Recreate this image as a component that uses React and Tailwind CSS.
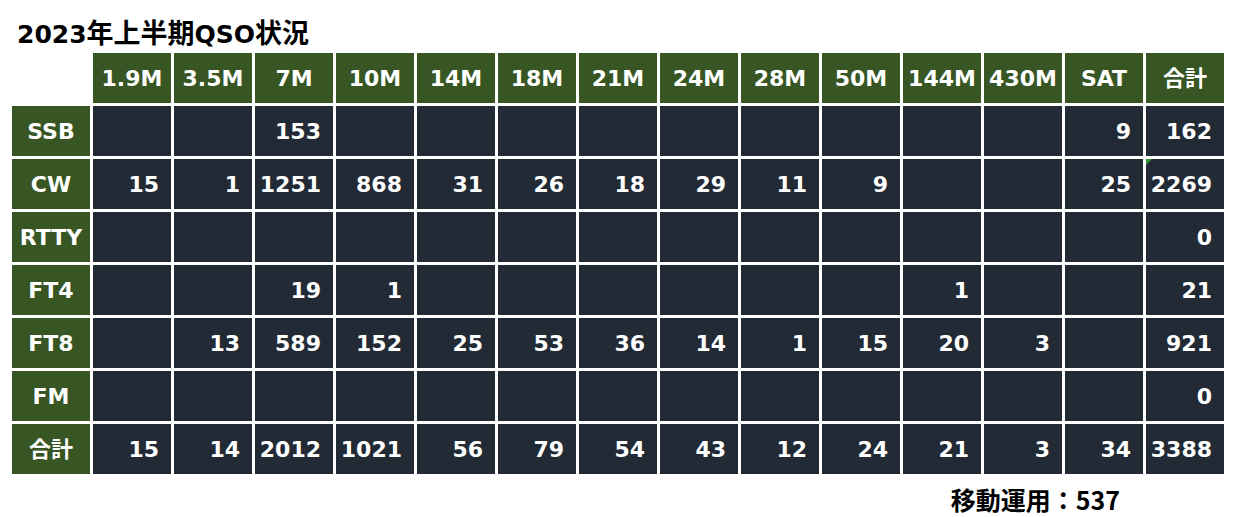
import React from 'react';

const BANDS = ['1.9M', '3.5M', '7M', '10M', '14M', '18M', '21M', '24M', '28M', '50M', '144M', '430M', 'SAT', '合計'];

const ROWS = [
    { mode: 'SSB', values: ['', '', '153', '', '', '', '', '', '', '', '', '', '9', '162'] },
    { mode: 'CW', values: ['15', '1', '1251', '868', '31', '26', '18', '29', '11', '9', '', '', '25', '2269'], flag: 13 },
    { mode: 'RTTY', values: ['', '', '', '', '', '', '', '', '', '', '', '', '', '0'] },
    { mode: 'FT4', values: ['', '', '19', '1', '', '', '', '', '', '', '1', '', '', '21'] },
    { mode: 'FT8', values: ['', '13', '589', '152', '25', '53', '36', '14', '1', '15', '20', '3', '', '921'] },
    { mode: 'FM', values: ['', '', '', '', '', '', '', '', '', '', '', '', '', '0'] },
    { mode: '合計', values: ['15', '14', '2012', '1021', '56', '79', '54', '43', '12', '24', '21', '3', '34', '3388'] },
];

const FONT = "font-['DejaVu_Sans','Noto_Sans_CJK_JP',sans-serif]";

const App = () => {
    return (
        <div className={`w-[1239px] h-[517px] bg-white overflow-hidden ${FONT} font-bold`}>
            {/* Title */}
            <div className="h-[53px] pl-[17px] pt-[19px] text-[25px] leading-[30px] text-black">
                2023<span className="text-[27px]">年上半期</span>QSO<span className="text-[27px]">状況</span>
            </div>

            {/* Table */}
            <div className="ml-[12px] grid grid-cols-[repeat(15,78px)] auto-rows-[50px] gap-[3px] text-[22px] text-white">
                <div />
                {BANDS.map((band) => (
                    <div key={band} className="bg-[#375623] flex items-center justify-center">
                        {band}
                    </div>
                ))}

                {ROWS.map((row) => (
                    <React.Fragment key={row.mode}>
                        <div className="bg-[#375623] flex items-center justify-center">{row.mode}</div>
                        {row.values.map((v, i) => (
                            <div key={i} className="relative bg-[#222b35] flex items-center justify-end pr-[12px]">
                                {row.flag === i && (
                                    <span className="absolute left-0 top-0 w-[6px] h-[6px] bg-[#2e9a3a] [clip-path:polygon(0_0,100%_0,0_100%)]" />
                                )}
                                {v}
                            </div>
                        ))}
                    </React.Fragment>
                ))}
            </div>

            {/* Footer */}
            <div className="flex justify-end pr-[119px] mt-[10px] font-['Noto_Sans_CJK_JP',sans-serif] text-[25px] leading-[30px] text-black">
                移動運用：537
            </div>
        </div>
    );
};

export default App;
